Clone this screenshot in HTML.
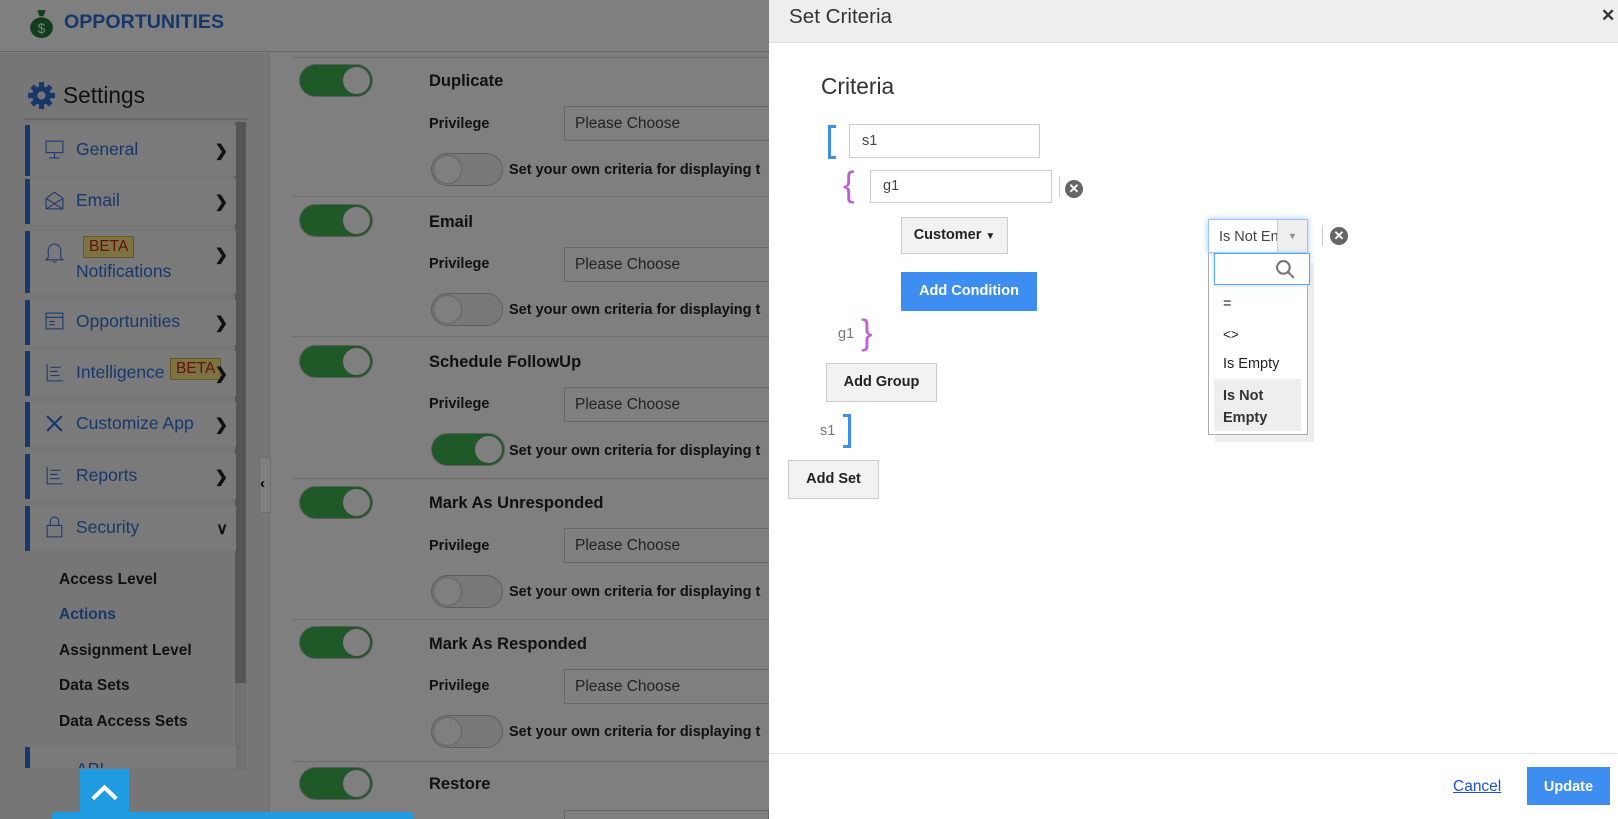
<!DOCTYPE html>
<html><head><meta charset="utf-8"><style>
*{box-sizing:border-box;margin:0;padding:0}
html,body{width:1618px;height:819px;overflow:hidden;background:#fff;font-family:"Liberation Sans",Arial,sans-serif;position:relative}
.a{position:absolute}
.hdr{left:0;top:0;width:769px;height:52px;background:#fff;border-bottom:1px solid #ccc}
.side{left:0;top:53px;width:270px;height:766px;background:#ededed;border-right:1px solid #ddd}
.mi{position:absolute;left:25px;width:211px;background:#f5f5f5;border-left:5px solid #2f6fd6;color:#2f6fd6;font-size:17.5px}
.mi .t{position:absolute;left:46px}
.mi .ch{position:absolute;right:8px;color:#222;font-size:16px;font-weight:bold}
.mi svg{position:absolute;left:14px}
.sub{position:absolute;left:59px;font-size:15.5px;font-weight:bold;color:#222}
.beta{position:absolute;background:#fbe785;border:1px solid #c8b040;color:#c21;font-size:15.5px;padding:1px 5px}
.tg{position:absolute;width:74px;height:33px;border-radius:17px;background:#3fb34f;border:1px solid #bbb}
.tg::after{content:"";position:absolute;right:2px;top:2px;width:27px;height:27px;border-radius:50%;background:#fff;box-shadow:0 0 2px #888}
.tg.off{background:#f0f0f0;width:72px}
.tg.off::after{left:2px;right:auto}
.title{position:absolute;left:429px;font-size:16.5px;font-weight:bold;color:#222}
.pl{position:absolute;left:429px;font-size:14.5px;font-weight:bold;color:#222}
.sel{position:absolute;left:564px;width:217px;height:35px;border:1px solid #ccc;background:#fff;font-size:15.5px;color:#444;padding:8px 10px}
.st{position:absolute;left:509px;font-size:14.5px;font-weight:bold;color:#222;white-space:nowrap}
.row-line{position:absolute;left:293px;width:485px;border-top:1px solid #ddd}
.ov{left:0;top:0;width:769px;height:819px;background:rgba(0,0,0,0.5)}
.modal{left:769px;top:0;width:849px;height:819px;background:#fff}
.btn{position:absolute;background:#f2f2f2;border:1px solid #ccc;font-size:14.5px;font-weight:bold;color:#222;text-align:center}
.inp{position:absolute;border:1px solid #ccc;background:#fff;font-size:14.5px;color:#444;padding:0 12px}
.xc{position:absolute;width:18px;height:18px;border-radius:50%;background:#666;color:#fff;font-size:13px;font-weight:bold;text-align:center;line-height:18px}
</style></head><body>
<div class="a hdr">
<svg class="a" style="left:29px;top:8px" width="25" height="31" viewBox="0 0 24 30"><path d="M8 2 L16 2 L14 8 L10 8Z" fill="#1e7a3a"/><ellipse cx="12" cy="19" rx="11" ry="10" fill="#1e7a3a"/><text x="12" y="24" font-size="13" fill="#fff" text-anchor="middle" font-family="Liberation Sans">$</text></svg>
<div class="a" style="left:64px;top:11px;font-size:19.6px;font-weight:bold;color:#2f6fd6">OPPORTUNITIES</div>
</div>
<div class="a side">
<svg class="a" style="left:27px;top:28px" width="29" height="29" viewBox="0 0 28 28"><circle cx="14" cy="14" r="9" fill="#2f6fd6"/><g stroke="#2f6fd6" stroke-width="5"><line x1="14" y1="1" x2="14" y2="27"/><line x1="1" y1="14" x2="27" y2="14"/><line x1="5" y1="5" x2="23" y2="23"/><line x1="23" y1="5" x2="5" y2="23"/></g><circle cx="14" cy="14" r="4" fill="#ededed"/></svg>
<div class="a" style="left:63px;top:29px;font-size:22.7px;color:#222">Settings</div>
<div class="a" style="left:25px;top:65px;width:223px;border-top:2px solid #ccc"></div>
<div class="a" style="left:235px;top:69px;width:11px;height:648px;background:#e0e0e0"></div>
<div class="a" style="left:235px;top:69px;width:11px;height:561px;background:#aaa"></div>
</div>
<div class="mi" style="top:125px;height:51px"><svg width="21" height="21" style="top:14px" viewBox="0 0 20 20" fill="none" stroke="#2f6fd6"><rect x="2" y="2" width="16" height="11"/><line x1="10" y1="13" x2="10" y2="18"/><line x1="5" y1="18" x2="15" y2="18"/></svg><span class="t" style="top:14px">General</span><span class="ch" style="top:16px">&#x276F;</span></div>
<div class="mi" style="top:179px;height:45px"><svg width="21" height="21" style="top:11px" viewBox="0 0 20 20" fill="none" stroke="#2f6fd6"><path d="M2 8 L10 2 L18 8 V18 H2Z M2 8 L18 18 M18 8 L2 18"/></svg><span class="t" style="top:11px">Email</span><span class="ch" style="top:13px">&#x276F;</span></div>
<div class="mi" style="top:231px;height:62px"><svg width="21" height="23" style="top:10px" viewBox="0 0 20 22" fill="none" stroke="#2f6fd6"><path d="M4 16 V9 a6 6 0 0 1 12 0 V16 L18 18 H2Z M8 20 h4"/></svg><span class="beta" style="left:53px;top:5px">BETA</span><span class="t" style="top:30px">Notifications</span><span class="ch" style="top:14px">&#x276F;</span></div>
<div class="mi" style="top:300px;height:45px"><svg width="21" height="21" style="top:11px" viewBox="0 0 20 20" fill="none" stroke="#2f6fd6"><rect x="2" y="2" width="16" height="15"/><line x1="2" y1="6" x2="18" y2="6"/><line x1="5" y1="10" x2="10" y2="10"/><line x1="5" y1="13" x2="10" y2="13"/></svg><span class="t" style="top:11px">Opportunities</span><span class="ch" style="top:13px">&#x276F;</span></div>
<div class="mi" style="top:351px;height:45px"><svg width="21" height="21" style="top:11px" viewBox="0 0 20 20" fill="none" stroke="#2f6fd6"><path d="M3 2 V18 H18 M6 5 H16 M6 9 H13 M6 13 H15"/></svg><span class="t" style="top:11px">Intelligence</span><span class="beta" style="left:140px;top:7px">BETA</span><span class="ch" style="top:13px">&#x276F;</span></div>
<div class="mi" style="top:402px;height:45px"><svg width="21" height="21" style="top:11px" viewBox="0 0 20 20" fill="none" stroke="#2f6fd6" stroke-width="2"><path d="M3 3 L17 17 M17 3 L3 17"/></svg><span class="t" style="top:11px">Customize App</span><span class="ch" style="top:13px">&#x276F;</span></div>
<div class="mi" style="top:454px;height:45px"><svg width="21" height="21" style="top:11px" viewBox="0 0 20 20" fill="none" stroke="#2f6fd6"><path d="M3 2 V18 H18 M6 5 H16 M6 9 H13 M6 13 H15"/></svg><span class="t" style="top:11px">Reports</span><span class="ch" style="top:13px">&#x276F;</span></div>
<div class="mi" style="top:506px;height:45px"><svg width="21" height="23" style="top:10px" viewBox="0 0 20 22" fill="none" stroke="#2f6fd6"><rect x="3" y="9" width="14" height="11"/><path d="M6 9 V5 a4 4 0 0 1 8 0 V9"/></svg><span class="t" style="top:11px">Security</span><span class="ch" style="top:13px">&#x2228;</span></div>
<div class="sub" style="top:571px">Access Level</div>
<div class="sub" style="top:606px;color:#2f6fd6">Actions</div>
<div class="sub" style="top:642px">Assignment Level</div>
<div class="sub" style="top:677px">Data Sets</div>
<div class="sub" style="top:713px">Data Access Sets</div>
<div class="mi" style="top:747px;height:21px;overflow:hidden"><span class="t" style="top:12px">API</span></div>
<div class="a" style="left:259px;top:457px;width:12px;height:56px;background:#fff;border:1px solid #ddd;font-size:15px;font-weight:bold;padding-top:17px">&#x2039;</div>

<div class="row-line" style="top:57px"></div>
<div class="tg" style="left:299px;top:64px"></div><div class="title" style="top:72px">Duplicate</div>
<div class="pl" style="top:116px">Privilege</div><div class="sel" style="top:106px">Please Choose</div>
<div class="tg off" style="left:431px;top:153px"></div><div class="st" style="top:162px">Set your own criteria for displaying t</div>
<div class="row-line" style="top:196px"></div>
<div class="tg" style="left:299px;top:204px"></div><div class="title" style="top:213px">Email</div>
<div class="pl" style="top:256px">Privilege</div><div class="sel" style="top:247px">Please Choose</div>
<div class="tg off" style="left:431px;top:293px"></div><div class="st" style="top:302px">Set your own criteria for displaying t</div>
<div class="row-line" style="top:336px"></div>
<div class="tg" style="left:299px;top:345px"></div><div class="title" style="top:353px">Schedule FollowUp</div>
<div class="pl" style="top:396px">Privilege</div><div class="sel" style="top:387px">Please Choose</div>
<div class="tg" style="left:431px;top:433px"></div><div class="st" style="top:443px">Set your own criteria for displaying t</div>
<div class="row-line" style="top:478px"></div>
<div class="tg" style="left:299px;top:486px"></div><div class="title" style="top:494px">Mark As Unresponded</div>
<div class="pl" style="top:538px">Privilege</div><div class="sel" style="top:528px">Please Choose</div>
<div class="tg off" style="left:431px;top:575px"></div><div class="st" style="top:584px">Set your own criteria for displaying t</div>
<div class="row-line" style="top:619px"></div>
<div class="tg" style="left:299px;top:626px"></div><div class="title" style="top:635px">Mark As Responded</div>
<div class="pl" style="top:678px">Privilege</div><div class="sel" style="top:669px">Please Choose</div>
<div class="tg off" style="left:431px;top:715px"></div><div class="st" style="top:724px">Set your own criteria for displaying t</div>
<div class="row-line" style="top:761px"></div>
<div class="tg" style="left:299px;top:767px"></div><div class="title" style="top:775px">Restore</div>
<div class="a" style="left:564px;top:810px;width:205px;height:9px;border:1px solid #ccc;border-bottom:none;background:#fff"></div>

<div class="a ov"></div>
<div class="a" style="left:80px;top:769px;width:49px;height:50px;background:#1f9be2"><svg width="49" height="41" viewBox="0 0 47 40"><path d="M12 29 L23.5 18 L35 29" stroke="#fff" stroke-width="4" fill="none"/></svg></div>
<div class="a" style="left:52px;top:812px;width:361px;height:7px;background:#1f9be2;border-radius:4px 4px 0 0"></div>

<div class="a modal">
<div class="a" style="left:0;top:0;width:849px;height:43px;background:#eee;border-bottom:1px solid #ddd"></div>
<div class="a" style="left:20px;top:5px;font-size:20.6px;color:#333">Set Criteria</div>
<div class="a" style="left:832px;top:6px;font-size:17px;font-weight:bold;color:#333">&#x2715;</div>
<div class="a" style="left:52px;top:73px;font-size:22.7px;color:#333">Criteria</div>
<div class="a" style="left:59px;top:125px;width:8px;height:34px;border:3px solid #3d8ef0;border-right:none"></div>
<div class="inp" style="left:80px;top:124px;width:191px;height:34px;line-height:32px">s1</div>
<div class="a" style="left:74px;top:165px;font-size:35px;color:#c060d0">{</div>
<div class="inp" style="left:101px;top:170px;width:182px;height:33px;line-height:31px">g1</div>
<div class="a" style="left:290px;top:176px;height:21px;border-left:1px solid #ccc"></div>
<div class="xc" style="left:296px;top:180px">&#x2715;</div>
<div class="btn" style="left:132px;top:217px;width:107px;height:37px;line-height:35px">Customer <span style="font-size:10px">&#x25BC;</span></div>
<div class="btn" style="left:132px;top:272px;width:136px;height:39px;line-height:37px;background:#3d8ef0;border-color:#3d8ef0;color:#fff">Add Condition</div>
<div class="a" style="left:69px;top:326px;font-size:14.5px;color:#777">g1</div>
<div class="a" style="left:92px;top:313px;font-size:35px;color:#c060d0">}</div>
<div class="btn" style="left:57px;top:363px;width:111px;height:39px;line-height:37px">Add Group</div>
<div class="a" style="left:51px;top:423px;font-size:14.5px;color:#777">s1</div>
<div class="a" style="left:74px;top:414px;width:8px;height:34px;border:3px solid #3d8ef0;border-left:none"></div>
<div class="btn" style="left:19px;top:460px;width:91px;height:39px;line-height:37px">Add Set</div>

<div class="a" style="left:446px;top:263px;width:99px;height:179px;background:#eee"></div>
<div class="a" style="left:439px;top:219px;width:100px;height:216px;border:1px solid #aaa;background:#fff"></div>
<div class="a" style="left:439px;top:219px;width:100px;height:34px;border:1px solid #9cc6ef;box-shadow:0 0 6px #9cc6ef;background:#fff;font-size:14.5px;color:#444;padding:9px 10px;overflow:hidden;white-space:nowrap">Is Not En</div>
<div class="a" style="left:508px;top:220px;width:30px;height:32px;background:#eee;border-left:1px solid #ccc;color:#888;font-size:9px;text-align:center;line-height:32px">&#x25BC;</div>
<div class="a" style="left:445px;top:253px;width:96px;height:32px;border:1px solid #5aa6ea;background:#fff;box-shadow:0 0 5px #bcd9f4"><svg class="a" style="left:60px;top:5px" width="21" height="21" viewBox="0 0 20 20" fill="none" stroke="#777" stroke-width="2"><circle cx="8" cy="8" r="6"/><line x1="12.5" y1="12.5" x2="18" y2="18"/></svg></div>
<div class="a" style="left:454px;top:296px;font-size:14.5px;color:#222">=</div>
<div class="a" style="left:454px;top:327px;font-size:13.5px;color:#222">&lt;&gt;</div>
<div class="a" style="left:454px;top:356px;font-size:14.5px;color:#222">Is Empty</div>
<div class="a" style="left:445px;top:379px;width:87px;height:52px;background:#eee;font-size:14.5px;font-weight:bold;color:#333;padding:6px 9px;line-height:22px">Is Not<br>Empty</div>
<div class="a" style="left:553px;top:225px;height:21px;border-left:1px solid #ccc"></div>
<div class="xc" style="left:561px;top:227px">&#x2715;</div>

<div class="a" style="left:0;top:753px;width:849px;border-top:1px solid #e5e5e5"></div>
<div class="a" style="left:684px;top:778px;font-size:15.5px;color:#1a4fd6;text-decoration:underline">Cancel</div>
<div class="btn" style="left:758px;top:767px;width:83px;height:38px;line-height:38px;background:#3d8ef0;border-color:#3d8ef0;color:#fff">Update</div>
</div>
</body></html>
